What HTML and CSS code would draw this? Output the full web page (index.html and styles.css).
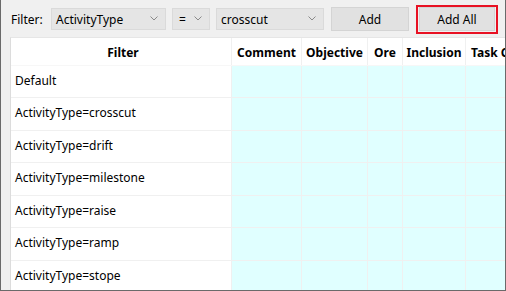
FILE: index.html
```html
<!DOCTYPE html>
<html>
<head>
<meta charset="utf-8">
<link rel="stylesheet" href="styles.css">
</head>
<body>
<div class="window">
  <div class="toolbar">
    <span class="label">Filter:</span>
    <div class="combo c1"><span>ActivityType</span><svg class="chev" width="8" height="5" viewBox="0 0 8 5"><polyline points="0.5,0.5 4,4 7.5,0.5" fill="none" stroke="#8a8a8a" stroke-width="1"/></svg></div>
    <div class="combo c2"><span>=</span><svg class="chev" width="8" height="5" viewBox="0 0 8 5"><polyline points="0.5,0.5 4,4 7.5,0.5" fill="none" stroke="#8a8a8a" stroke-width="1"/></svg></div>
    <div class="combo c3"><span>crosscut</span><svg class="chev" width="8" height="5" viewBox="0 0 8 5"><polyline points="0.5,0.5 4,4 7.5,0.5" fill="none" stroke="#8a8a8a" stroke-width="1"/></svg></div>
    <button class="btn add">Add</button>
    <div class="highlight"><button class="btn addall">Add All</button></div>
  </div>
  <div class="table">
    <div class="row head">
      <div class="cell fcol">Filter</div>
      <div class="cell w-comment">Comment</div>
      <div class="cell w-obj">Objective</div>
      <div class="cell w-ore">Ore</div>
      <div class="cell w-inc">Inclusion</div>
      <div class="cell w-task">Task C</div>
    </div>
    <div class="row"><div class="cell fcol">Default</div><div class="cell w-comment"></div><div class="cell w-obj"></div><div class="cell w-ore"></div><div class="cell w-inc"></div><div class="cell w-task"></div></div>
    <div class="row"><div class="cell fcol">ActivityType=crosscut</div><div class="cell w-comment"></div><div class="cell w-obj"></div><div class="cell w-ore"></div><div class="cell w-inc"></div><div class="cell w-task"></div></div>
    <div class="row"><div class="cell fcol">ActivityType=drift</div><div class="cell w-comment"></div><div class="cell w-obj"></div><div class="cell w-ore"></div><div class="cell w-inc"></div><div class="cell w-task"></div></div>
    <div class="row"><div class="cell fcol">ActivityType=milestone</div><div class="cell w-comment"></div><div class="cell w-obj"></div><div class="cell w-ore"></div><div class="cell w-inc"></div><div class="cell w-task"></div></div>
    <div class="row"><div class="cell fcol">ActivityType=raise</div><div class="cell w-comment"></div><div class="cell w-obj"></div><div class="cell w-ore"></div><div class="cell w-inc"></div><div class="cell w-task"></div></div>
    <div class="row"><div class="cell fcol">ActivityType=ramp</div><div class="cell w-comment"></div><div class="cell w-obj"></div><div class="cell w-ore"></div><div class="cell w-inc"></div><div class="cell w-task"></div></div>
    <div class="row"><div class="cell fcol">ActivityType=stope</div><div class="cell w-comment"></div><div class="cell w-obj"></div><div class="cell w-ore"></div><div class="cell w-inc"></div><div class="cell w-task"></div></div>
  </div>
</div>
</body>
</html>
```
FILE: styles.css
```css
* { box-sizing: border-box; }
html, body { margin: 0; padding: 0; }
body {
  font-family: "Noto Sans", "Open Sans", sans-serif;
  font-size: 12px;
  color: #000;
  background: #f0f0f0;
}
.window {
  width: 506px;
  height: 291px;
  background: #f0f0f0;
  border-left: 1px solid #6a6a6a;
  border-right: 1px solid #6a6a6a;
  border-bottom: 1px solid #6a6a6a;
  overflow: hidden;
  display: flex;
  flex-direction: column;
}
.toolbar {
  height: 37px;
  flex: none;
  display: flex;
  align-items: center;
  padding-left: 10px;
  padding-top: 1px;
}
.label {
  width: 40px;
  color: #000;
  padding-top: 1px;
}
.combo {
  height: 22px;
  background: #e5e5e5;
  border: 1px solid #dadada;
  display: flex;
  align-items: center;
  justify-content: space-between;
  padding: 0 7px 0 4px;
}
.combo .chev { margin-top: -1px; }
.c1 { width: 115px; margin-right: 6px; }
.c2 { width: 38px; margin-right: 6px; padding-left: 6px; }
.c3 { width: 108px; margin-right: 7px; }
.btn {
  font: inherit;
  color: #000;
  height: 24px;
  background: #e1e1e1;
  border: 1px solid #d4d4d4;
  padding: 0;
  margin: 0;
}
.add { width: 78px; margin-right: 7px; }
.highlight {
  border: 2px solid #e81123;
  padding: 1px;
  height: 29px;
  width: 82px;
  display: flex;
  align-items: center;
  justify-content: center;
}
.addall { width: 76px; }
.table {
  flex: 1;
  margin-left: 9px;
  background: #fff;
  border-left: 1px solid #dcdcdc;
  border-top: 1px solid #e6e6e6;
  overflow: hidden;
}
.row {
  display: flex;
  height: 32.5px;
  border-bottom: 1px solid #f0f0f0;
}
.row.head {
  height: 27.5px;
  border-bottom: 1px solid #f7f7f7;
  font-weight: bold;
}
.cell {
  flex: none;
  display: flex;
  align-items: center;
  border-right: 1px solid #f0f0f0;
  white-space: nowrap;
  overflow: hidden;
  background: #e0ffff;
}
.row.head .cell {
  justify-content: center;
  background: #fff;
  padding-top: 2px;
  padding-bottom: 0;
}
.fcol {
  width: 221px;
  background: #fff;
  padding-left: 4px;
  padding-bottom: 2px;
}
.row .cell.fcol { background: #fff; }
.w-comment { width: 70px; }
.w-obj { width: 66px; }
.w-ore { width: 35px; }
.w-inc { width: 63px; }
.w-task { width: 100px; }
.row.head .w-task { justify-content: flex-start; padding-left: 5px; }
```
